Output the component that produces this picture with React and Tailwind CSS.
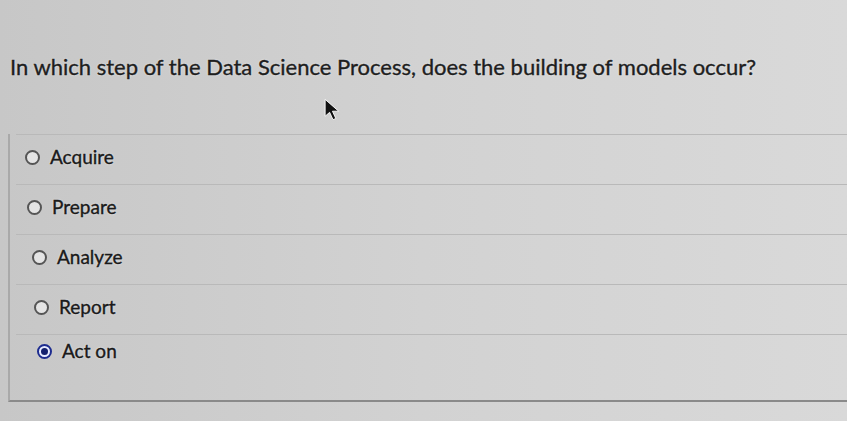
import React from "react";

const options = [
  { label: "Acquire", pad: "pl-[9px]", checked: false },
  { label: "Prepare", pad: "pl-[11px]", checked: false },
  { label: "Analyze", pad: "pl-[16px]", checked: false },
  { label: "Report", pad: "pl-[18px]", checked: false },
  { label: "Act on", pad: "pl-[21px]", checked: true },
];

function Radio({ checked }) {
  if (checked) {
    return (
      <span className="flex h-[15px] w-[15px] shrink-0 items-center justify-center rounded-full border-2 border-[#1d2c8f] bg-[#e8ecff]">
        <span className="h-[7px] w-[7px] rounded-full bg-[#14206e]" />
      </span>
    );
  }
  return (
    <span className="h-[15px] w-[15px] shrink-0 rounded-full border-2 border-[#555] bg-[#e4e4e4]" />
  );
}

function Cursor() {
  return (
    <svg width="18" height="23" viewBox="0 0 16 20" className="absolute left-[324px] top-[98px]">
      <path d="M1 1 L1 16 L5 12.5 L8 19 L10.5 18 L7.5 11.5 L13 11.5 Z" fill="#111" stroke="#fff" strokeWidth="0.8" />
    </svg>
  );
}

export default function App() {
  return (
    <div
      className="relative h-[421px] w-[847px] overflow-hidden bg-gradient-to-r from-[#c7c7c7] via-[#d2d2d2] to-[#d9d9d9]"
      style={{ fontFamily: "Lato, 'Open Sans', sans-serif" }}
    >
      <div className="pl-[10px] pt-[52px]">
        <h1 className="text-[22px] leading-[30px] text-[#1e1e1e] [-webkit-text-stroke:0.4px_#1e1e1e] [text-shadow:0_0_2px_#f4f4f4]">
          In which step of the Data Science Process, does the building of models occur?
        </h1>
      </div>
      <Cursor />

      <div className="ml-[8px] mt-[52px] h-[268px] border-b-2 border-l-2 border-b-[#8a8a8a] border-l-[#a9a9a9]">
        <div className="ml-[6px] flex flex-col">
          {options.map((opt, i) => (
            <div
              key={opt.label}
              className={`flex items-center gap-[10px] border-t border-[#b9b9b9] ${opt.pad} ${
                i === options.length - 1 ? "h-[33px] pt-[1px]" : "h-[50px] pb-[5px]"
              }`}
            >
              <Radio checked={opt.checked} />
              <span className="text-[19px] text-[#1a1a1a] [-webkit-text-stroke:0.4px_#1a1a1a] [text-shadow:0_0_2px_#f4f4f4]">
                {opt.label}
              </span>
            </div>
          ))}
        </div>
      </div>
    </div>
  );
}
